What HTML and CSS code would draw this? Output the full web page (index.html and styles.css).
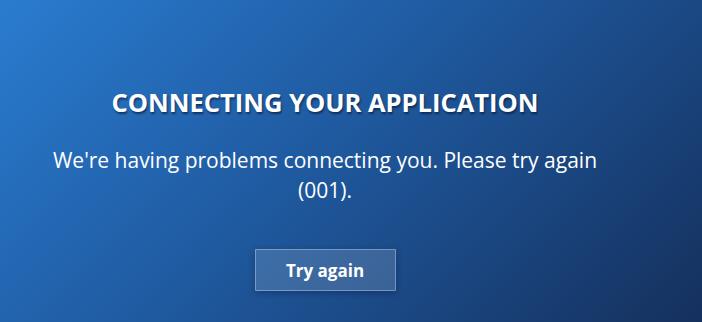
FILE: index.html
```html
<!DOCTYPE html>
<html lang="en">
<head>
<meta charset="utf-8">
<title>Connecting your application</title>
<link rel="stylesheet" href="styles.css">
</head>
<body>
<main class="screen">
  <section class="panel">
    <h1 class="title">CONNECTING YOUR APPLICATION</h1>
    <p class="message">We're having problems connecting you. Please try again (001).</p>
    <button class="retry" type="button">Try again</button>
  </section>
</main>
</body>
</html>
```
FILE: styles.css
```css
html, body {
  margin: 0;
  padding: 0;
  height: 100%;
}
body {
  background: linear-gradient(135deg, #2a7cd0 0%, #1f5aa0 45%, #15305d 100%);
  font-family: "Open Sans", "Noto Sans", sans-serif;
  color: #ffffff;
  overflow: hidden;
}
.screen {
  height: 100%;
  display: flex;
  justify-content: flex-start;
}
.panel {
  width: 650px;
  display: flex;
  flex-direction: column;
  align-items: center;
  text-align: center;
  padding-top: 86px;
}
.title {
  margin: 0;
  font-size: 25.5px;
  line-height: 32px;
  font-weight: 700;
  letter-spacing: 0;
  text-shadow: 1px 2px 2px rgba(5, 20, 50, 0.6);
}
.message {
  margin: 27px 0 0;
  width: 560px;
  font-size: 21px;
  line-height: 30px;
  font-weight: 400;
}
.retry {
  margin-top: 44px;
  width: 141px;
  height: 42px;
  background: rgba(255, 255, 255, 0.14);
  border: 1px solid rgba(255, 255, 255, 0.32);
  border-radius: 1px;
  box-shadow: 0 2px 6px rgba(0, 20, 60, 0.35);
  color: #ffffff;
  font-family: "Open Sans", "Noto Sans", sans-serif;
  font-size: 17px;
  font-weight: 700;
  padding: 0;
}
```
